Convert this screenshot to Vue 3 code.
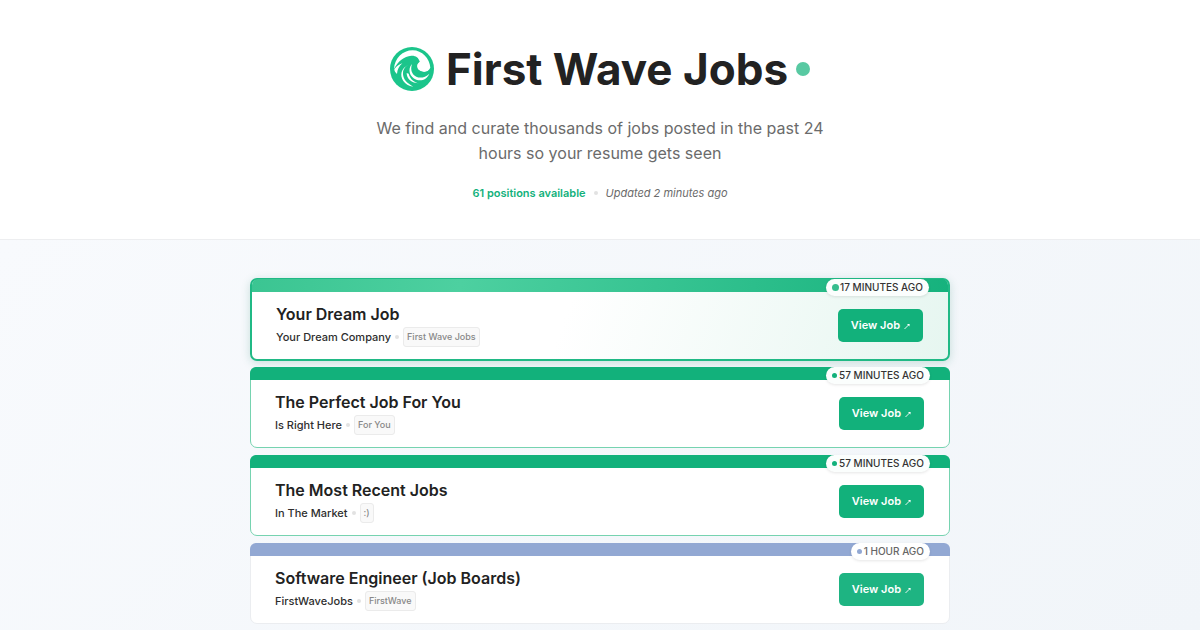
<script setup>
const jobs = [
  { title: 'Your Dream Job', company: 'Your Dream Company', tag: 'First Wave Jobs', time: '17 minutes ago', kind: 'featured' },
  { title: 'The Perfect Job For You', company: 'Is Right Here', tag: 'For You', time: '57 minutes ago', kind: 'fresh' },
  { title: 'The Most Recent Jobs', company: 'In The Market', tag: ':)', time: '57 minutes ago', kind: 'fresh' },
  { title: 'Software Engineer (Job Boards)', company: 'FirstWaveJobs', tag: 'FirstWave', time: '1 hour ago', kind: 'recent' },
]
</script>

<template>
  <div class="page">
    <header class="hero">
      <h1 class="brand">
        <svg class="logo" viewBox="0 0 132 132" aria-hidden="true">
          <circle cx="66" cy="66" r="66" fill="#1bc58b" />
          <path fill="#fff" d="M12 66C14 34 38 10 68 10C96 10 119 34 121 62C117 71 109 76 99 75C86 73 78 65 80 55C81 50 84 46 89 44C86 31 76 25 64 26C42 28 24 42 12 66Z" />
          <path fill="#1bc58b" d="M87 43C73 45 68 57 74 69C81 83 99 88 120 76L122 66C114 76 99 78 88 70C79 62 79 51 89 44Z" />
          <path fill="#fff" d="M66 51C60 69 66 83 79 89C91 95 106 91 118 80C111 96 95 104 79 98C58 90 52 67 66 51Z" />
          <path fill="#fff" d="M54 54C34 64 28 84 40 102C46 111 56 117 70 119C50 108 40 97 39 82C38 69 43 61 54 54Z" />
          <path fill="#fff" d="M50 78C50 95 64 109 88 109C72 106 60 96 56 80Z" />
          <path fill="#fff" d="M13 67C20 57 27 52 37 49C27 58 22 68 21 81C16 77 13 72 13 67Z" />
        </svg>
        <span>First Wave Jobs</span>
        <span class="live"></span>
      </h1>
      <p class="tagline">We find and curate thousands of jobs posted in the past 24 hours so your resume gets seen</p>
      <p class="stats">
        <strong>61 positions available</strong>
        <span class="sep"></span>
        <em>Updated 2 minutes ago</em>
      </p>
    </header>
    <main class="board">
      <article v-for="job in jobs" :key="job.title" class="card" :class="job.kind">
        <div class="strip"></div>
        <span class="time"><i class="dot"></i>{{ job.time }}</span>
        <div class="body">
          <div>
            <h2 class="title">{{ job.title }}</h2>
            <div class="meta">
              <span>{{ job.company }}</span>
              <span class="sep"></span>
              <span class="tag">{{ job.tag }}</span>
            </div>
          </div>
          <a class="view" href="#">View Job
            <svg viewBox="0 0 6 8" width="6" height="8" aria-hidden="true"><path d="M0.5 7L5 2.5" fill="none" stroke="currentColor" stroke-width="0.9" /><path d="M3 2H5.5V4.5Z" fill="currentColor" /></svg>
          </a>
        </div>
      </article>
    </main>
  </div>
</template>

<style>
body { margin: 0; }
</style>

<style scoped>
.page {
  display: flex;
  flex-direction: column;
  min-height: 100vh;
  font-family: Inter, "Liberation Sans", sans-serif;
  color: #222;
}
.hero {
  padding: 42px 24px 37px;
  background: #fff;
  border-bottom: 1px solid #edeef0;
  text-align: center;
}
.brand {
  display: flex;
  align-items: center;
  justify-content: center;
  margin: 0;
  font-size: 44px;
  line-height: 54px;
  font-weight: 700;
}
.logo { width: 44px; height: 44px; margin-right: 12px; }
.live {
  width: 14px;
  height: 14px;
  margin-left: 8px;
  border-radius: 50%;
  background: #58c9a2;
}
.tagline {
  max-width: 480px;
  margin: 20px auto 0;
  font-size: 16px;
  line-height: 25px;
  color: #6b6b6b;
}
.stats {
  display: flex;
  align-items: center;
  justify-content: center;
  gap: 8px;
  margin: 18px 0 0;
  font-size: 11px;
  line-height: 18px;
  color: #6b6b6b;
}
.stats strong { font-weight: 600; color: #12b17b; }
.sep { width: 4px; height: 4px; border-radius: 50%; background: #e2e2e2; }
.board {
  flex: 1;
  padding: 38px 24px 0;
  background: linear-gradient(135deg, #f8fafd, #f1f5f9);
}
.card {
  position: relative;
  box-sizing: border-box;
  max-width: 700px;
  margin: 0 auto 7px;
  border: 1px solid #76d3b0;
  border-radius: 7px;
  background: #fff;
}
.strip {
  height: 13px;
  margin: -1px -1px 0;
  border-radius: 6px 6px 0 0;
  background: #12b17b;
}
.body {
  display: flex;
  align-items: center;
  justify-content: space-between;
  padding: 12px 25px 12px 24px;
}
.title { margin: 0; font-size: 16px; line-height: 20px; font-weight: 600; }
.meta {
  display: flex;
  align-items: center;
  gap: 4px;
  margin-top: 3px;
  font-size: 11px;
  line-height: 20px;
  font-weight: 500;
  color: #2e2e2e;
}
.tag {
  padding: 0 3px;
  border: 1px solid #ebebeb;
  border-radius: 3px;
  background: #f9f9f9;
  font-size: 9px;
  line-height: 18px;
  color: #888;
}
.view {
  display: flex;
  align-items: center;
  gap: 4px;
  padding: 0 13px;
  border-radius: 5px;
  background: #12b17b;
  color: #fff;
  font-size: 11px;
  line-height: 33px;
  font-weight: 600;
  text-decoration: none;
}
.time {
  position: absolute;
  top: -1px;
  right: 19px;
  display: flex;
  align-items: center;
  gap: 2px;
  padding: 0 6px;
  border-radius: 9px;
  background: #fbfefd;
  box-shadow: 0 1px 3px rgba(0, 0, 0, 0.1);
  font-size: 10px;
  line-height: 17px;
  font-weight: 500;
  color: #333;
  text-transform: uppercase;
}
.dot { width: 5px; height: 5px; border-radius: 50%; background: #12b17b; }
.featured {
  margin-bottom: 6px;
  border: 2px solid #20b985;
  background: linear-gradient(110deg, #fff 45%, #e6f6f0);
  box-shadow: 0 2px 10px rgba(18, 120, 90, 0.2);
}
.featured .strip {
  margin: -1px 0 0;
  background: linear-gradient(100deg, #3bc592, #4dd0a0 30%, #16b27d);
}
.featured .body { padding: 12px 25px 12px 24px; }
.featured .time { gap: 1px; }
.featured .dot { width: 7px; height: 7px; background: #36bd8e; }
.recent { border-color: #ebedf0; }
.recent .strip { background: #92a8d3; }
.recent .dot { background: #92a8d3; }
.recent .time { color: #666; background: #fff; }
.recent .view { background: #1eb482; }
</style>
